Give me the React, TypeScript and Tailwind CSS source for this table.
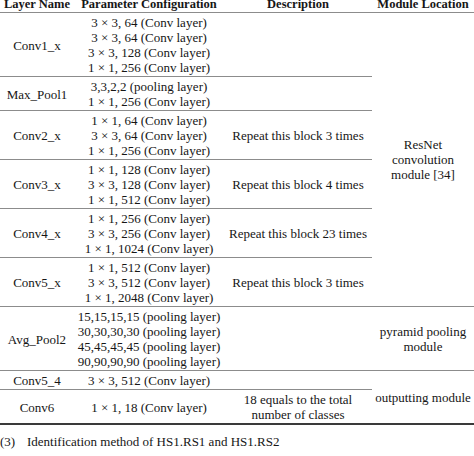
const rows = [
  { name: "Conv1_x", params: ["3 × 3, 64 (Conv layer)", "3 × 3, 64 (Conv layer)", "3 × 3, 128 (Conv layer)", "1 × 1, 256 (Conv layer)"], desc: [] as string[] },
  { name: "Max_Pool1", params: ["3,3,2,2 (pooling layer)", "1 × 1, 256 (Conv layer)"], desc: [] },
  { name: "Conv2_x", params: ["1 × 1, 64 (Conv layer)", "3 × 3, 64 (Conv layer)", "1 × 1, 256 (Conv layer)"], desc: ["Repeat this block 3 times"] },
  { name: "Conv3_x", params: ["1 × 1, 128 (Conv layer)", "3 × 3, 128 (Conv layer)", "1 × 1, 512 (Conv layer)"], desc: ["Repeat this block 4 times"] },
  { name: "Conv4_x", params: ["1 × 1, 256 (Conv layer)", "3 × 3, 256 (Conv layer)", "1 × 1, 1024 (Conv layer)"], desc: ["Repeat this block 23 times"] },
  { name: "Conv5_x", params: ["1 × 1, 512 (Conv layer)", "3 × 3, 512 (Conv layer)", "1 × 1, 2048 (Conv layer)"], desc: ["Repeat this block 3 times"] },
];

const line = "border-b border-[#8c8c8c]";
const last = "border-b-2 border-[#3a3a3a]";

function Cells({ name, params, desc, border }: { name: string; params: string[]; desc: string[]; border: string }) {
  return (
    <>
      <div className={`flex items-center justify-center pt-[2px] pb-[1px] ${border}`}>{name}</div>
      <div className={`flex flex-col items-center justify-center pt-[2px] pb-[1px] ${border}`}>
        {params.map((p, i) => (
          <span key={i}>{p}</span>
        ))}
      </div>
      <div className={`flex flex-col items-center justify-center pt-[2px] pb-[1px] ${border}`}>
        {desc.map((d, i) => (
          <span key={i}>{d}</span>
        ))}
      </div>
    </>
  );
}

export default function App() {
  return (
    <div className="w-[474px] h-[456px] overflow-hidden bg-white text-[#161616] text-[13px] leading-[15px] font-['Liberation_Serif',serif]">
      <div className="-mt-[3px] grid grid-cols-[74px_150px_148px_102px] text-center">
        <div className={`font-bold text-[12.5px] ${line}`}>Layer Name</div>
        <div className={`font-bold text-[12.5px] ${line}`}>Parameter Configuration</div>
        <div className={`font-bold text-[12.5px] ${line}`}>Description</div>
        <div className={`font-bold text-[12.5px] whitespace-nowrap ${line}`}>Module Location</div>

        {rows.map((r, i) => (
          <Cells key={r.name} name={r.name} params={r.params} desc={r.desc} border={line} />
        )).flatMap((c, i) =>
          i === 0
            ? [
                c,
                <div key="resnet" className={`row-span-6 flex flex-col items-center justify-center ${line}`}>
                  <span>ResNet</span>
                  <span>convolution</span>
                  <span>module [34]</span>
                </div>,
              ]
            : [c]
        )}

        <Cells
          name="Avg_Pool2"
          params={["15,15,15,15 (pooling layer)", "30,30,30,30 (pooling layer)", "45,45,45,45 (pooling layer)", "90,90,90,90 (pooling layer)"]}
          desc={[]}
          border={line}
        />
        <div className={`flex flex-col items-center justify-center ${line}`}>
          <span>pyramid pooling</span>
          <span>module</span>
        </div>

        <Cells name="Conv5_4" params={["3 × 3, 512 (Conv layer)"]} desc={[]} border={line} />
        <div className={`row-span-2 flex items-center justify-center whitespace-nowrap ${last}`}>outputting module</div>
        <Cells name="Conv6" params={["1 × 1, 18 (Conv layer)"]} desc={["18 equals to the total", "number of classes"]} border={last} />
      </div>

      <div className="mt-[9px] flex">
        <span className="w-[27px]">(3)</span>
        <span>Identification method of HS1.RS1 and HS1.RS2</span>
      </div>
    </div>
  );
}
